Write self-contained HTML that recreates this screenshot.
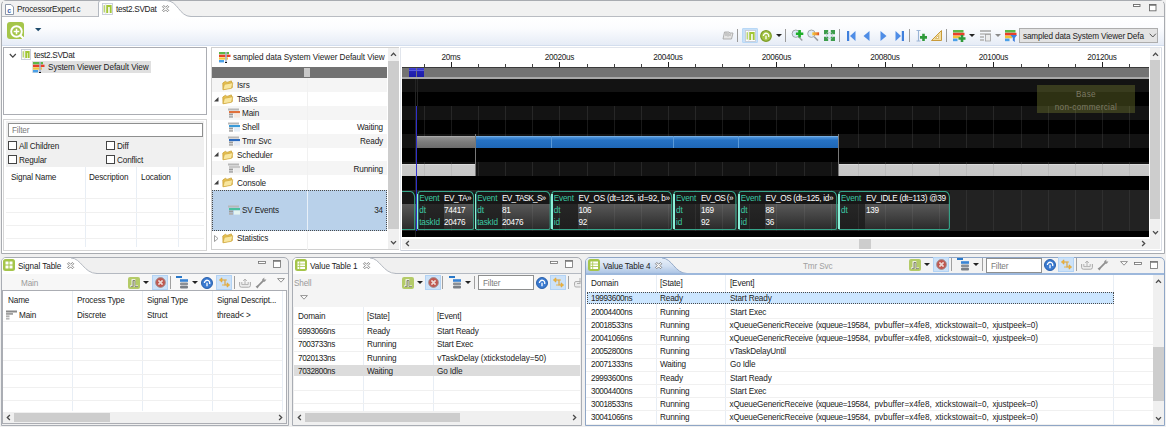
<!DOCTYPE html>
<html><head><meta charset="utf-8"><title>System Viewer</title>
<style>
*{box-sizing:border-box;margin:0;padding:0}
html,body{width:1166px;height:427px;overflow:hidden;background:#f0f0f0}
body{font-family:"Liberation Sans",sans-serif;font-size:8.2px;color:#222;position:relative;line-height:10px}
.a{position:absolute}
.t{position:absolute;white-space:nowrap;letter-spacing:-0.15px}
.r{text-align:right}
.g{color:#8a8a8a}
svg{position:absolute;overflow:visible}
</style></head><body>

<div class="a" style="left:1px;top:0px;width:1164px;height:254px;border:1px solid #a8abb0;border-radius:5px 5px 0 0;background:#f0f0f0"></div>
<div class="a" style="left:3px;top:1px;width:1160px;height:15px;background:#f1f1f1;"></div>
<div class="a" style="left:2px;top:16px;width:1162px;height:1px;background:#b9bcc2;"></div>
<svg style="left:98px;top:0px" width="104" height="18"><path d="M0.5,17.5 V3 Q0.5,0.5 3,0.5 H68 C80,0.5 81,16.5 93,16.5 H104 V18 H0.5Z" fill="#fff" stroke="none"/><path d="M0.5,17 V3 Q0.5,0.5 3,0.5 H68 C80,0.5 81,16.5 93,16.5 H104" fill="none" stroke="#b4b9c1"/></svg>
<svg style="left:5px;top:4px" width="9" height="11"><path d="M0.5,0.5 H6 L8.5,3 V10.5 H0.5Z" fill="#fff" stroke="#8c97a8"/><text x="2.2" y="8.6" font-size="7" font-weight="bold" fill="#3a62a8" font-family="Liberation Sans">c</text></svg>
<div class="t" style="left:17px;top:5px;letter-spacing:-0.2px;">ProcessorExpert.c</div>
<svg style="left:102px;top:3px" width="11" height="12"><rect x="0.5" y="0.5" width="10" height="11" fill="#fdfdfd" stroke="#c6ccd8" stroke-width="0.9"/><path d="M2.2,9.5 V2.2" stroke="#9cc430" stroke-width="1" fill="none"/><path d="M3.8,1 V11" stroke="#d0d0d8" stroke-width="0.6"/><path d="M5.2,10 V3 H8.7 V10" stroke="#a2c636" stroke-width="1.9" fill="none"/></svg>
<div class="t" style="left:116px;top:5px;letter-spacing:-0.3px;">test2.SVDat</div>
<svg style="left:162px;top:4.8px" width="8" height="8"><path d="M0.5,1.8 L1.8,0.5 L3.6,2.3 L5.4,0.5 L6.7,1.8 L4.9,3.6 L6.7,5.4 L5.4,6.7 L3.6,4.9 L1.8,6.7 L0.5,5.4 L2.3,3.6Z" fill="#fff" stroke="#6c6c6c" stroke-width="0.8"/></svg>
<svg style="left:1133px;top:4px" width="24" height="10"><rect x="0.5" y="0.5" width="6.5" height="2" fill="#fff" stroke="#6a6a6a" stroke-width="0.9"/><rect x="16.5" y="0.5" width="6.5" height="6.3" fill="#fff" stroke="#6a6a6a" stroke-width="0.9"/><rect x="16.5" y="0.5" width="6.5" height="1.2" fill="#6a6a6a"/></svg>
<div class="a" style="left:2px;top:17px;width:1162px;height:28px;background:linear-gradient(#ffffff 0%,#fbfcfe 40%,#e6ecf6 100%);"></div>
<div class="a" style="left:2px;top:45px;width:1162px;height:1px;background:#d3deee;"></div>
<div class="a" style="left:2px;top:46px;width:1162px;height:207px;background:#fff;"></div>
<svg style="left:7px;top:22px" width="18" height="18"><rect x="0" y="0" width="17" height="17" rx="3" fill="#a5c54a"/><circle cx="9.5" cy="9.5" r="5.3" fill="none" stroke="#fff" stroke-width="1.9"/><path d="M9.5,6.7 V12.3 M6.7,9.5 H12.3" stroke="#fff" stroke-width="1.5"/><path d="M13.5,13.5 L16.5,16.5" stroke="#fff" stroke-width="2.2"/></svg>
<svg style="left:34.5px;top:28px" width="8" height="4"><path d="M0,0 H6.4 L3.2,3.3Z" fill="#1e4a6b"/></svg>
<svg style="left:722px;top:30px" width="12" height="11"><path d="M1,9 L2.5,2 H7 L8,3 H11 L9.5,9Z" fill="#e4e4e4" stroke="#a8a8a8" stroke-width="0.9"/><path d="M4,2.5 V6 M6,3 V6.5 M8,3.5 V6" stroke="#9a9a9a" stroke-width="0.8"/></svg>
<div class="a" style="left:737px;top:29px;width:1px;height:13px;background:#9a9a9a;"></div>
<div class="a" style="left:741.5px;top:28px;width:16.5px;height:14.5px;background:#c8e0f8;border:1px solid #b8d8f6;border-radius:1px"></div>
<svg style="left:745px;top:30px" width="11" height="12"><rect x="0.5" y="0.5" width="10" height="11" fill="#fdfdfd" stroke="#c6ccd8" stroke-width="0.9"/><path d="M2.2,9.5 V2.2" stroke="#9cc430" stroke-width="1" fill="none"/><path d="M3.8,1 V11" stroke="#d0d0d8" stroke-width="0.6"/><path d="M5.2,10 V3 H8.7 V10" stroke="#a2c636" stroke-width="1.9" fill="none"/></svg>
<svg style="left:760px;top:29.5px" width="12" height="12"><circle cx="6" cy="6" r="5.3" fill="#a4c444" stroke="#7c9c28" stroke-width="1.2"/><path d="M6,9.3 V5.8 M3.4,6 A2.7,2.7 0 1 1 8.6,7" fill="none" stroke="#fff" stroke-width="1.3"/></svg>
<svg style="left:776px;top:34px" width="6" height="4"><path d="M0,0 H6 L3,3Z" fill="#222"/></svg>
<div class="a" style="left:785px;top:29px;width:1px;height:13px;background:#9a9a9a;"></div>
<svg style="left:791px;top:29px" width="13" height="13"><circle cx="4.8" cy="4.7" r="3.7" fill="#dce9f7" stroke="#a2a6aa" stroke-width="1"/><path d="M7.6,7.8 L11.3,11.6" stroke="#9a9ea2" stroke-width="1.5"/><path d="M8.6,1 V8.4 M4.9,4.7 H12.3" stroke="#1fae2a" stroke-width="2.6"/></svg>
<svg style="left:807px;top:29px" width="13" height="13"><circle cx="4.4" cy="4.7" r="3.7" fill="#dce9f7" stroke="#a2a6aa" stroke-width="1"/><path d="M7.2,7.8 L11,11.6" stroke="#9a9ea2" stroke-width="1.5"/><defs><linearGradient id="zo" x1="0" y1="0" x2="1" y2="0"><stop offset="0" stop-color="#f4c838"/><stop offset="0.6" stop-color="#ee9030"/><stop offset="1" stop-color="#d84828"/></linearGradient></defs><rect x="5.3" y="3.3" width="6.8" height="3" fill="url(#zo)"/></svg>
<svg style="left:824px;top:30px" width="11" height="11"><circle cx="5.5" cy="5.5" r="3" fill="#e0ecf6" stroke="#b4bcc4" stroke-width="0.8"/><path d="M0,0 H4.2 V1.8 L1.8,4.2 H0Z M11,0 H6.8 V1.8 L9.2,4.2 H11Z M0,11 H4.2 V9.2 L1.8,6.8 H0Z M11,11 H6.8 V9.2 L9.2,6.8 H11Z" fill="#3c9c4c"/><path d="M2,2 L4,4 M9,2 L7,4 M2,9 L4,7 M9,9 L7,7" stroke="#3c9c4c" stroke-width="1.2"/></svg>
<div class="a" style="left:839px;top:29px;width:1px;height:13px;background:#9a9a9a;"></div>
<svg style="left:847px;top:31px" width="9" height="10"><rect x="0" y="0" width="2.2" height="10" fill="#3f7fdc"/><path d="M8.5,0 V10 L3,5Z" fill="#4f8de6"/></svg>
<svg style="left:863px;top:31px" width="7" height="10"><path d="M6.5,0 V10 L0.5,5Z" fill="#4f8de6"/></svg>
<svg style="left:880px;top:31px" width="7" height="10"><path d="M0.5,0 V10 L6.5,5Z" fill="#4f8de6"/></svg>
<svg style="left:895px;top:31px" width="9" height="10"><rect x="6.8" y="0" width="2.2" height="10" fill="#3f7fdc"/><path d="M0.5,0 V10 L6,5Z" fill="#4f8de6"/></svg>
<div class="a" style="left:909px;top:29px;width:1px;height:13px;background:#9a9a9a;"></div>
<svg style="left:916px;top:30px" width="12" height="12"><path d="M0.5,0.5 H4.5 M2.5,0.5 V11 M0.5,11 H4.5" stroke="#9ab4d6" stroke-width="1.1" fill="none"/><path d="M7.5,3.8 V11 M4,7.4 H11" stroke="#2f9a3a" stroke-width="2.6"/></svg>
<svg style="left:931px;top:30px" width="11" height="11"><path d="M10.5,0.5 V10.5 H0.5Z" fill="#f4dfa0" stroke="#c89a3a" stroke-width="1"/><path d="M7.5,5.5 V8.5 H4.5Z" fill="#fff" stroke="#c89a3a" stroke-width="0.6"/></svg>
<div class="a" style="left:946px;top:29px;width:1px;height:13px;background:#9a9a9a;"></div>
<svg style="left:953px;top:30px" width="13" height="12"><rect x="0" y="0" width="10.5" height="2.6" fill="#5cb848"/><rect x="0" y="2.8" width="11.5" height="2.7" fill="#e8402a"/><rect x="0" y="5.7" width="7" height="2.6" fill="#f2c43a"/><rect x="0" y="8.6" width="4.5" height="2.6" fill="#4aa0e8"/><path d="M9,5 V12 M5.5,8.5 H12.5" stroke="#2f9a3a" stroke-width="2.6"/></svg>
<svg style="left:969px;top:34px" width="6" height="4"><path d="M0,0 H6 L3,3Z" fill="#222"/></svg>
<svg style="left:980px;top:30px" width="12" height="12"><rect x="0" y="0" width="11" height="2" fill="#b8b8b8"/><rect x="0" y="3" width="11" height="2" fill="#c8c8c8"/><rect x="0" y="6" width="4" height="2" fill="#c0c0c0"/><rect x="0" y="9" width="4" height="2" fill="#c0c0c0"/><rect x="5.5" y="4.5" width="5" height="6.5" fill="#ececec" stroke="#a0a0a0" stroke-width="0.8"/></svg>
<svg style="left:995px;top:34px" width="6" height="4"><path d="M0,0 H6 L3,3Z" fill="#8a8a8a"/></svg>
<svg style="left:1005px;top:30px" width="12" height="12"><rect x="0" y="0" width="10.5" height="2.6" fill="#5cb848"/><rect x="0" y="2.8" width="11.5" height="2.7" fill="#e8402a"/><rect x="0" y="5.7" width="7" height="2.6" fill="#f2c43a"/><rect x="0" y="8.6" width="4.5" height="2.6" fill="#4aa0e8"/><path d="M5.5,5 H12 L9.8,8 V12 L7.8,10.5 V8Z" fill="#3f7fdc"/></svg>
<div class="a" style="left:1019px;top:28px;width:139px;height:15px;background:#e3e3e3;border:1px solid #adadad"></div>
<div class="t" style="left:1023px;top:32px;letter-spacing:-0.15px;">sampled data System Viewer Defa</div>
<svg style="left:1149px;top:33px" width="8" height="5"><path d="M0.7,0.7 L3.8,4 L6.9,0.7" fill="none" stroke="#555" stroke-width="1"/></svg>
<div class="a" style="left:3px;top:47px;width:204px;height:68px;background:#fff;border:1px solid #abadb3"></div>
<svg style="left:9px;top:53px" width="8" height="6"><path d="M0.8,1 L3.8,4.2 L6.8,1" fill="none" stroke="#444" stroke-width="1.2"/></svg>
<svg style="left:21px;top:49px" width="10" height="11"><rect x="0.5" y="0.5" width="9" height="10" fill="#fdfdfd" stroke="#c6ccd8" stroke-width="0.9"/><path d="M2.2,8.5 V2.2" stroke="#9cc430" stroke-width="1" fill="none"/><path d="M3.8,1 V10" stroke="#d0d0d8" stroke-width="0.6"/><path d="M5.2,9 V3 H7.7 V9" stroke="#a2c636" stroke-width="1.9" fill="none"/></svg>
<div class="t" style="left:34px;top:51px;letter-spacing:-0.3px;">test2.SVDat</div>
<div class="a" style="left:32px;top:61px;width:119px;height:12px;background:#e0e0e0;"></div>
<svg style="left:33px;top:62px" width="12" height="11"><rect x="0" y="0" width="10" height="2.3" fill="#5cb848"/><rect x="0" y="2.7" width="11.5" height="2.3" fill="#e8402a"/><rect x="0" y="5.4" width="9" height="2.2" fill="#f2c43a"/><rect x="0" y="8" width="5" height="2.4" fill="#4aa0e8"/><rect x="6.2" y="0" width="1.6" height="10.4" fill="#a8b4d0"/><rect x="6" y="10" width="2" height="1" fill="#111"/></svg>
<div class="t" style="left:48px;top:63px;letter-spacing:-0.08px;">System Viewer Default View</div>
<div class="a" style="left:3px;top:119px;width:204px;height:132px;background:#fff;border:1px solid #d5d5d5"></div>
<div class="a" style="left:6px;top:121px;width:198px;height:46px;background:#f0f0f0;"></div>
<div class="a" style="left:8px;top:123px;width:195px;height:14px;background:#fff;border:1px solid #8e8f8f"></div>
<div class="t" style="left:12px;top:126px;color:#7a7a7a;">Filter</div>
<div class="a" style="left:8px;top:141px;width:9px;height:9px;background:#fff;border:1px solid #444"></div>
<div class="t" style="left:19px;top:142px;">All Children</div>
<div class="a" style="left:106px;top:141px;width:9px;height:9px;background:#fff;border:1px solid #444"></div>
<div class="t" style="left:117px;top:142px;">Diff</div>
<div class="a" style="left:8px;top:155px;width:9px;height:9px;background:#fff;border:1px solid #444"></div>
<div class="t" style="left:19px;top:156px;">Regular</div>
<div class="a" style="left:106px;top:155px;width:9px;height:9px;background:#fff;border:1px solid #444"></div>
<div class="t" style="left:117px;top:156px;">Conflict</div>
<div class="t" style="left:11px;top:173px;">Signal Name</div>
<div class="t" style="left:89px;top:173px;">Description</div>
<div class="t" style="left:141px;top:173px;">Location</div>
<div class="a" style="left:85px;top:167px;width:1px;height:80px;background:#e8eef5;"></div>
<div class="a" style="left:136px;top:167px;width:1px;height:80px;background:#e8eef5;"></div>
<div class="a" style="left:178px;top:167px;width:1px;height:80px;background:#e8eef5;"></div>
<div class="a" style="left:6px;top:198px;width:198px;height:1px;background:#f0f0f0;"></div>
<div class="a" style="left:6px;top:212px;width:198px;height:1px;background:#f0f0f0;"></div>
<div class="a" style="left:6px;top:225px;width:198px;height:1px;background:#f0f0f0;"></div>
<div class="a" style="left:6px;top:238px;width:198px;height:1px;background:#f0f0f0;"></div>
<div class="a" style="left:211px;top:47px;width:188px;height:203px;background:#fff;border:1px solid #d0d0d0"></div>
<svg style="left:219px;top:52px" width="12" height="11"><rect x="0" y="0" width="10" height="2.3" fill="#5cb848"/><rect x="0" y="2.7" width="11.5" height="2.3" fill="#e8402a"/><rect x="0" y="5.4" width="9" height="2.2" fill="#f2c43a"/><rect x="0" y="8" width="5" height="2.4" fill="#4aa0e8"/><rect x="6.2" y="0" width="1.6" height="10.4" fill="#a8b4d0"/><rect x="6" y="10" width="2" height="1" fill="#111"/></svg>
<div class="t" style="left:233px;top:53px;letter-spacing:-0.06px;">sampled data System Viewer Default View</div>
<div class="a" style="left:212px;top:67px;width:175px;height:11px;background:#727272;"></div>
<div class="a" style="left:304px;top:68px;width:6px;height:9px;background:#c8c8c8;"></div>
<div class="a" style="left:212px;top:78px;width:175px;height:14px;background:#f5f5f5;"></div>
<svg style="left:222px;top:80px" width="11" height="10"><path d="M1,9.6 L0.8,3 L3.4,1.3 L5,2.4 L9.4,0.9 L10.4,7.4Z" fill="#e6c152" stroke="#c49a2c" stroke-width="0.7"/><path d="M1,9.8 L2.4,4.3 L10.8,2.7 L9.5,8.3Z" fill="#f8e69e" stroke="#d0a63a" stroke-width="0.7"/></svg>
<div class="t" style="left:237px;top:81px;">Isrs</div>
<svg style="left:222px;top:94px" width="11" height="10"><path d="M1,9.6 L0.8,3 L3.4,1.3 L5,2.4 L9.4,0.9 L10.4,7.4Z" fill="#e6c152" stroke="#c49a2c" stroke-width="0.7"/><path d="M1,9.8 L2.4,4.3 L10.8,2.7 L9.5,8.3Z" fill="#f8e69e" stroke="#d0a63a" stroke-width="0.7"/></svg>
<div class="t" style="left:237px;top:95px;">Tasks</div>
<svg style="left:214px;top:97px" width="5" height="5"><path d="M4.5,0 V4.5 H0Z" fill="#404040"/></svg>
<div class="a" style="left:212px;top:106px;width:175px;height:14px;background:#f5f5f5;"></div>
<svg style="left:228px;top:108px" width="12" height="10"><rect x="0" y="0.5" width="11" height="2" fill="#b8b8b8"/><rect x="1" y="3" width="11" height="2.2" fill="#e0703a"/><rect x="1" y="5.6" width="4" height="1.8" fill="#9a9a9a"/><rect x="6" y="5.6" width="6" height="4" fill="#f4e8e0"/><rect x="1" y="8" width="4" height="1.8" fill="#b0b0b0"/></svg>
<div class="t" style="left:242px;top:109px;">Main</div>
<svg style="left:228px;top:122px" width="12" height="10"><rect x="0" y="0.5" width="11" height="2" fill="#b8b8b8"/><rect x="1" y="3" width="11" height="2.2" fill="#3a9ad8"/><rect x="1" y="5.6" width="4" height="1.8" fill="#9a9a9a"/><rect x="6" y="5.6" width="6" height="4" fill="#e4eef8"/><rect x="1" y="8" width="4" height="1.8" fill="#b0b0b0"/></svg>
<div class="t" style="left:242px;top:123px;">Shell</div>
<div class="t r" style="left:310px;top:123px;width:73px">Waiting</div>
<div class="a" style="left:212px;top:134px;width:175px;height:14px;background:#f5f5f5;"></div>
<svg style="left:228px;top:136px" width="12" height="10"><rect x="0" y="0.5" width="11" height="2" fill="#b8b8b8"/><rect x="1" y="3" width="11" height="2.2" fill="#2a6ac0"/><rect x="1" y="5.6" width="4" height="1.8" fill="#9a9a9a"/><rect x="6" y="5.6" width="6" height="4" fill="#e4eaf4"/><rect x="1" y="8" width="4" height="1.8" fill="#b0b0b0"/></svg>
<div class="t" style="left:242px;top:137px;">Tmr Svc</div>
<div class="t r" style="left:310px;top:137px;width:73px">Ready</div>
<svg style="left:222px;top:150px" width="11" height="10"><path d="M1,9.6 L0.8,3 L3.4,1.3 L5,2.4 L9.4,0.9 L10.4,7.4Z" fill="#e6c152" stroke="#c49a2c" stroke-width="0.7"/><path d="M1,9.8 L2.4,4.3 L10.8,2.7 L9.5,8.3Z" fill="#f8e69e" stroke="#d0a63a" stroke-width="0.7"/></svg>
<div class="t" style="left:237px;top:151px;">Scheduler</div>
<svg style="left:214px;top:152px" width="5" height="5"><path d="M4.5,0 V4.5 H0Z" fill="#404040"/></svg>
<div class="a" style="left:212px;top:161px;width:175px;height:14px;background:#f5f5f5;"></div>
<svg style="left:228px;top:163px" width="12" height="10"><rect x="0" y="0.5" width="11" height="2" fill="#b8b8b8"/><rect x="1" y="3" width="11" height="2.2" fill="#c8c8c8"/><rect x="1" y="5.6" width="4" height="1.8" fill="#9a9a9a"/><rect x="6" y="5.6" width="6" height="4" fill="#ececec"/><rect x="1" y="8" width="4" height="1.8" fill="#b0b0b0"/></svg>
<div class="t" style="left:242px;top:165px;">Idle</div>
<div class="t r" style="left:310px;top:165px;width:73px">Running</div>
<svg style="left:222px;top:177px" width="11" height="10"><path d="M1,9.6 L0.8,3 L3.4,1.3 L5,2.4 L9.4,0.9 L10.4,7.4Z" fill="#e6c152" stroke="#c49a2c" stroke-width="0.7"/><path d="M1,9.8 L2.4,4.3 L10.8,2.7 L9.5,8.3Z" fill="#f8e69e" stroke="#d0a63a" stroke-width="0.7"/></svg>
<div class="t" style="left:237px;top:179px;">Console</div>
<svg style="left:214px;top:180px" width="5" height="5"><path d="M4.5,0 V4.5 H0Z" fill="#404040"/></svg>
<div class="a" style="left:307px;top:78px;width:1px;height:172px;background:#f1f1f1;"></div>
<div class="a" style="left:212px;top:190px;width:175px;height:41px;background:#b9d1ea;border:1px dotted #4a4a4a"></div>
<div class="a" style="left:307px;top:191px;width:1px;height:39px;background:#e8f0f8;"></div>
<svg style="left:228px;top:205px" width="12" height="10"><rect x="0" y="0.5" width="11" height="2" fill="#b8b8b8"/><rect x="1" y="3" width="11" height="2.2" fill="#4ac0a0"/><rect x="1" y="5.6" width="4" height="1.8" fill="#9a9a9a"/><rect x="6" y="5.6" width="6" height="4" fill="#e4f4f0"/><rect x="1" y="8" width="4" height="1.8" fill="#b0b0b0"/></svg>
<div class="t" style="left:242px;top:206px;">SV Events</div>
<div class="t r" style="left:310px;top:206px;width:73px">34</div>
<svg style="left:222px;top:233px" width="11" height="10"><path d="M1,9.6 L0.8,3 L3.4,1.3 L5,2.4 L9.4,0.9 L10.4,7.4Z" fill="#e6c152" stroke="#c49a2c" stroke-width="0.7"/><path d="M1,9.8 L2.4,4.3 L10.8,2.7 L9.5,8.3Z" fill="#f8e69e" stroke="#d0a63a" stroke-width="0.7"/></svg>
<div class="t" style="left:237px;top:234px;">Statistics</div>
<svg style="left:214px;top:235px" width="5" height="7"><path d="M0.5,0.5 L4,3.5 L0.5,6.5Z" fill="#fff" stroke="#888" stroke-width="0.8"/></svg>
<div class="a" style="left:388px;top:48px;width:10.5px;height:201px;background:#f0f0f0;"></div>
<div class="a" style="left:388px;top:61px;width:10.5px;height:168px;background:#cdcdcd;"></div>
<svg style="left:390px;top:52px" width="7" height="5"><path d="M1,3.9 L3.5,1.3 L6,3.9" fill="none" stroke="#4a4a4a" stroke-width="1.3"/></svg>
<svg style="left:390px;top:240px" width="7" height="5"><path d="M1,1.1 L3.5,3.7 L6,1.1" fill="none" stroke="#4a4a4a" stroke-width="1.3"/></svg>
<div class="a" style="left:402px;top:47px;width:759px;height:203px;background:#fff;"></div>
<div class="a" style="left:424px;top:64px;width:1px;height:3px;background:#444;"></div>
<div class="a" style="left:451px;top:62px;width:1px;height:5px;background:#222;"></div>
<div class="a" style="left:478px;top:64px;width:1px;height:3px;background:#444;"></div>
<div class="a" style="left:505px;top:64px;width:1px;height:3px;background:#444;"></div>
<div class="a" style="left:532px;top:64px;width:1px;height:3px;background:#444;"></div>
<div class="a" style="left:559px;top:62px;width:1px;height:5px;background:#222;"></div>
<div class="a" style="left:587px;top:64px;width:1px;height:3px;background:#444;"></div>
<div class="a" style="left:614px;top:64px;width:1px;height:3px;background:#444;"></div>
<div class="a" style="left:641px;top:64px;width:1px;height:3px;background:#444;"></div>
<div class="a" style="left:668px;top:62px;width:1px;height:5px;background:#222;"></div>
<div class="a" style="left:695px;top:64px;width:1px;height:3px;background:#444;"></div>
<div class="a" style="left:722px;top:64px;width:1px;height:3px;background:#444;"></div>
<div class="a" style="left:749px;top:64px;width:1px;height:3px;background:#444;"></div>
<div class="a" style="left:776px;top:62px;width:1px;height:5px;background:#222;"></div>
<div class="a" style="left:804px;top:64px;width:1px;height:3px;background:#444;"></div>
<div class="a" style="left:831px;top:64px;width:1px;height:3px;background:#444;"></div>
<div class="a" style="left:858px;top:64px;width:1px;height:3px;background:#444;"></div>
<div class="a" style="left:885px;top:62px;width:1px;height:5px;background:#222;"></div>
<div class="a" style="left:912px;top:64px;width:1px;height:3px;background:#444;"></div>
<div class="a" style="left:939px;top:64px;width:1px;height:3px;background:#444;"></div>
<div class="a" style="left:966px;top:64px;width:1px;height:3px;background:#444;"></div>
<div class="a" style="left:993px;top:62px;width:1px;height:5px;background:#222;"></div>
<div class="a" style="left:1021px;top:64px;width:1px;height:3px;background:#444;"></div>
<div class="a" style="left:1048px;top:64px;width:1px;height:3px;background:#444;"></div>
<div class="a" style="left:1075px;top:64px;width:1px;height:3px;background:#444;"></div>
<div class="a" style="left:1102px;top:62px;width:1px;height:5px;background:#222;"></div>
<div class="a" style="left:1129px;top:64px;width:1px;height:3px;background:#444;"></div>
<div class="t" style="left:421.0px;top:53px;width:60px;text-align:center;letter-spacing:-0.3px;color:#222">20ms</div>
<div class="t" style="left:529.5px;top:53px;width:60px;text-align:center;letter-spacing:-0.3px;color:#222">20020us</div>
<div class="t" style="left:638.0px;top:53px;width:60px;text-align:center;letter-spacing:-0.3px;color:#222">20040us</div>
<div class="t" style="left:746.4px;top:53px;width:60px;text-align:center;letter-spacing:-0.3px;color:#222">20060us</div>
<div class="t" style="left:854.9px;top:53px;width:60px;text-align:center;letter-spacing:-0.3px;color:#222">20080us</div>
<div class="t" style="left:963.4px;top:53px;width:60px;text-align:center;letter-spacing:-0.3px;color:#222">20100us</div>
<div class="t" style="left:1071.9px;top:53px;width:60px;text-align:center;letter-spacing:-0.3px;color:#222">20120us</div>
<div class="a" style="left:402px;top:67px;width:747px;height:1px;background:#3a3a3a;"></div>
<div class="a" style="left:402px;top:68px;width:747px;height:10px;background:#737373;"></div>
<div class="a" style="left:409px;top:68px;width:7.3px;height:8.8px;background:linear-gradient(#4a4adc,#2222b4 40%,#1c1ca8);"></div>
<div class="a" style="left:416.8px;top:68px;width:7.2px;height:8.8px;background:linear-gradient(#4a4adc,#2222b4 40%,#1c1ca8);"></div>
<div class="a" style="left:409px;top:70px;width:15px;height:1px;background:#5a5ae0;"></div>
<div class="a" style="left:402px;top:78px;width:747px;height:14px;background:#131313;"></div>
<div class="a" style="left:402px;top:92px;width:747px;height:14px;background:#000;"></div>
<div class="a" style="left:402px;top:106px;width:747px;height:14px;background:#131313;"></div>
<div class="a" style="left:424px;top:106px;width:1px;height:14px;background:#272727;"></div>
<div class="a" style="left:451px;top:106px;width:1px;height:14px;background:#272727;"></div>
<div class="a" style="left:478px;top:106px;width:1px;height:14px;background:#272727;"></div>
<div class="a" style="left:505px;top:106px;width:1px;height:14px;background:#272727;"></div>
<div class="a" style="left:532px;top:106px;width:1px;height:14px;background:#272727;"></div>
<div class="a" style="left:559px;top:106px;width:1px;height:14px;background:#272727;"></div>
<div class="a" style="left:587px;top:106px;width:1px;height:14px;background:#272727;"></div>
<div class="a" style="left:614px;top:106px;width:1px;height:14px;background:#272727;"></div>
<div class="a" style="left:641px;top:106px;width:1px;height:14px;background:#272727;"></div>
<div class="a" style="left:668px;top:106px;width:1px;height:14px;background:#272727;"></div>
<div class="a" style="left:695px;top:106px;width:1px;height:14px;background:#272727;"></div>
<div class="a" style="left:722px;top:106px;width:1px;height:14px;background:#272727;"></div>
<div class="a" style="left:749px;top:106px;width:1px;height:14px;background:#272727;"></div>
<div class="a" style="left:776px;top:106px;width:1px;height:14px;background:#272727;"></div>
<div class="a" style="left:804px;top:106px;width:1px;height:14px;background:#272727;"></div>
<div class="a" style="left:831px;top:106px;width:1px;height:14px;background:#272727;"></div>
<div class="a" style="left:858px;top:106px;width:1px;height:14px;background:#272727;"></div>
<div class="a" style="left:885px;top:106px;width:1px;height:14px;background:#272727;"></div>
<div class="a" style="left:912px;top:106px;width:1px;height:14px;background:#272727;"></div>
<div class="a" style="left:939px;top:106px;width:1px;height:14px;background:#272727;"></div>
<div class="a" style="left:966px;top:106px;width:1px;height:14px;background:#272727;"></div>
<div class="a" style="left:993px;top:106px;width:1px;height:14px;background:#272727;"></div>
<div class="a" style="left:1021px;top:106px;width:1px;height:14px;background:#272727;"></div>
<div class="a" style="left:1048px;top:106px;width:1px;height:14px;background:#272727;"></div>
<div class="a" style="left:1075px;top:106px;width:1px;height:14px;background:#272727;"></div>
<div class="a" style="left:1102px;top:106px;width:1px;height:14px;background:#272727;"></div>
<div class="a" style="left:1129px;top:106px;width:1px;height:14px;background:#272727;"></div>
<div class="a" style="left:402px;top:120px;width:747px;height:14px;background:#000;"></div>
<div class="a" style="left:424px;top:120px;width:1px;height:14px;background:#191919;"></div>
<div class="a" style="left:451px;top:120px;width:1px;height:14px;background:#191919;"></div>
<div class="a" style="left:478px;top:120px;width:1px;height:14px;background:#191919;"></div>
<div class="a" style="left:505px;top:120px;width:1px;height:14px;background:#191919;"></div>
<div class="a" style="left:532px;top:120px;width:1px;height:14px;background:#191919;"></div>
<div class="a" style="left:559px;top:120px;width:1px;height:14px;background:#191919;"></div>
<div class="a" style="left:587px;top:120px;width:1px;height:14px;background:#191919;"></div>
<div class="a" style="left:614px;top:120px;width:1px;height:14px;background:#191919;"></div>
<div class="a" style="left:641px;top:120px;width:1px;height:14px;background:#191919;"></div>
<div class="a" style="left:668px;top:120px;width:1px;height:14px;background:#191919;"></div>
<div class="a" style="left:695px;top:120px;width:1px;height:14px;background:#191919;"></div>
<div class="a" style="left:722px;top:120px;width:1px;height:14px;background:#191919;"></div>
<div class="a" style="left:749px;top:120px;width:1px;height:14px;background:#191919;"></div>
<div class="a" style="left:776px;top:120px;width:1px;height:14px;background:#191919;"></div>
<div class="a" style="left:804px;top:120px;width:1px;height:14px;background:#191919;"></div>
<div class="a" style="left:831px;top:120px;width:1px;height:14px;background:#191919;"></div>
<div class="a" style="left:858px;top:120px;width:1px;height:14px;background:#191919;"></div>
<div class="a" style="left:885px;top:120px;width:1px;height:14px;background:#191919;"></div>
<div class="a" style="left:912px;top:120px;width:1px;height:14px;background:#191919;"></div>
<div class="a" style="left:939px;top:120px;width:1px;height:14px;background:#191919;"></div>
<div class="a" style="left:966px;top:120px;width:1px;height:14px;background:#191919;"></div>
<div class="a" style="left:993px;top:120px;width:1px;height:14px;background:#191919;"></div>
<div class="a" style="left:1021px;top:120px;width:1px;height:14px;background:#191919;"></div>
<div class="a" style="left:1048px;top:120px;width:1px;height:14px;background:#191919;"></div>
<div class="a" style="left:1075px;top:120px;width:1px;height:14px;background:#191919;"></div>
<div class="a" style="left:1102px;top:120px;width:1px;height:14px;background:#191919;"></div>
<div class="a" style="left:1129px;top:120px;width:1px;height:14px;background:#191919;"></div>
<div class="a" style="left:402px;top:134px;width:747px;height:14px;background:#131313;"></div>
<div class="a" style="left:424px;top:134px;width:1px;height:14px;background:#272727;"></div>
<div class="a" style="left:451px;top:134px;width:1px;height:14px;background:#272727;"></div>
<div class="a" style="left:478px;top:134px;width:1px;height:14px;background:#272727;"></div>
<div class="a" style="left:505px;top:134px;width:1px;height:14px;background:#272727;"></div>
<div class="a" style="left:532px;top:134px;width:1px;height:14px;background:#272727;"></div>
<div class="a" style="left:559px;top:134px;width:1px;height:14px;background:#272727;"></div>
<div class="a" style="left:587px;top:134px;width:1px;height:14px;background:#272727;"></div>
<div class="a" style="left:614px;top:134px;width:1px;height:14px;background:#272727;"></div>
<div class="a" style="left:641px;top:134px;width:1px;height:14px;background:#272727;"></div>
<div class="a" style="left:668px;top:134px;width:1px;height:14px;background:#272727;"></div>
<div class="a" style="left:695px;top:134px;width:1px;height:14px;background:#272727;"></div>
<div class="a" style="left:722px;top:134px;width:1px;height:14px;background:#272727;"></div>
<div class="a" style="left:749px;top:134px;width:1px;height:14px;background:#272727;"></div>
<div class="a" style="left:776px;top:134px;width:1px;height:14px;background:#272727;"></div>
<div class="a" style="left:804px;top:134px;width:1px;height:14px;background:#272727;"></div>
<div class="a" style="left:831px;top:134px;width:1px;height:14px;background:#272727;"></div>
<div class="a" style="left:858px;top:134px;width:1px;height:14px;background:#272727;"></div>
<div class="a" style="left:885px;top:134px;width:1px;height:14px;background:#272727;"></div>
<div class="a" style="left:912px;top:134px;width:1px;height:14px;background:#272727;"></div>
<div class="a" style="left:939px;top:134px;width:1px;height:14px;background:#272727;"></div>
<div class="a" style="left:966px;top:134px;width:1px;height:14px;background:#272727;"></div>
<div class="a" style="left:993px;top:134px;width:1px;height:14px;background:#272727;"></div>
<div class="a" style="left:1021px;top:134px;width:1px;height:14px;background:#272727;"></div>
<div class="a" style="left:1048px;top:134px;width:1px;height:14px;background:#272727;"></div>
<div class="a" style="left:1075px;top:134px;width:1px;height:14px;background:#272727;"></div>
<div class="a" style="left:1102px;top:134px;width:1px;height:14px;background:#272727;"></div>
<div class="a" style="left:1129px;top:134px;width:1px;height:14px;background:#272727;"></div>
<div class="a" style="left:402px;top:148px;width:747px;height:14px;background:#000;"></div>
<div class="a" style="left:402px;top:162px;width:747px;height:14px;background:#131313;"></div>
<div class="a" style="left:424px;top:162px;width:1px;height:14px;background:#272727;"></div>
<div class="a" style="left:451px;top:162px;width:1px;height:14px;background:#272727;"></div>
<div class="a" style="left:478px;top:162px;width:1px;height:14px;background:#272727;"></div>
<div class="a" style="left:505px;top:162px;width:1px;height:14px;background:#272727;"></div>
<div class="a" style="left:532px;top:162px;width:1px;height:14px;background:#272727;"></div>
<div class="a" style="left:559px;top:162px;width:1px;height:14px;background:#272727;"></div>
<div class="a" style="left:587px;top:162px;width:1px;height:14px;background:#272727;"></div>
<div class="a" style="left:614px;top:162px;width:1px;height:14px;background:#272727;"></div>
<div class="a" style="left:641px;top:162px;width:1px;height:14px;background:#272727;"></div>
<div class="a" style="left:668px;top:162px;width:1px;height:14px;background:#272727;"></div>
<div class="a" style="left:695px;top:162px;width:1px;height:14px;background:#272727;"></div>
<div class="a" style="left:722px;top:162px;width:1px;height:14px;background:#272727;"></div>
<div class="a" style="left:749px;top:162px;width:1px;height:14px;background:#272727;"></div>
<div class="a" style="left:776px;top:162px;width:1px;height:14px;background:#272727;"></div>
<div class="a" style="left:804px;top:162px;width:1px;height:14px;background:#272727;"></div>
<div class="a" style="left:831px;top:162px;width:1px;height:14px;background:#272727;"></div>
<div class="a" style="left:858px;top:162px;width:1px;height:14px;background:#272727;"></div>
<div class="a" style="left:885px;top:162px;width:1px;height:14px;background:#272727;"></div>
<div class="a" style="left:912px;top:162px;width:1px;height:14px;background:#272727;"></div>
<div class="a" style="left:939px;top:162px;width:1px;height:14px;background:#272727;"></div>
<div class="a" style="left:966px;top:162px;width:1px;height:14px;background:#272727;"></div>
<div class="a" style="left:993px;top:162px;width:1px;height:14px;background:#272727;"></div>
<div class="a" style="left:1021px;top:162px;width:1px;height:14px;background:#272727;"></div>
<div class="a" style="left:1048px;top:162px;width:1px;height:14px;background:#272727;"></div>
<div class="a" style="left:1075px;top:162px;width:1px;height:14px;background:#272727;"></div>
<div class="a" style="left:1102px;top:162px;width:1px;height:14px;background:#272727;"></div>
<div class="a" style="left:1129px;top:162px;width:1px;height:14px;background:#272727;"></div>
<div class="a" style="left:402px;top:176px;width:747px;height:14px;background:#000;"></div>
<div class="a" style="left:402px;top:190px;width:747px;height:41px;background:#222222;"></div>
<div class="a" style="left:424px;top:190px;width:1px;height:41px;background:#2f2f2f;"></div>
<div class="a" style="left:451px;top:190px;width:1px;height:41px;background:#2f2f2f;"></div>
<div class="a" style="left:478px;top:190px;width:1px;height:41px;background:#2f2f2f;"></div>
<div class="a" style="left:505px;top:190px;width:1px;height:41px;background:#2f2f2f;"></div>
<div class="a" style="left:532px;top:190px;width:1px;height:41px;background:#2f2f2f;"></div>
<div class="a" style="left:559px;top:190px;width:1px;height:41px;background:#2f2f2f;"></div>
<div class="a" style="left:587px;top:190px;width:1px;height:41px;background:#2f2f2f;"></div>
<div class="a" style="left:614px;top:190px;width:1px;height:41px;background:#2f2f2f;"></div>
<div class="a" style="left:641px;top:190px;width:1px;height:41px;background:#2f2f2f;"></div>
<div class="a" style="left:668px;top:190px;width:1px;height:41px;background:#2f2f2f;"></div>
<div class="a" style="left:695px;top:190px;width:1px;height:41px;background:#2f2f2f;"></div>
<div class="a" style="left:722px;top:190px;width:1px;height:41px;background:#2f2f2f;"></div>
<div class="a" style="left:749px;top:190px;width:1px;height:41px;background:#2f2f2f;"></div>
<div class="a" style="left:776px;top:190px;width:1px;height:41px;background:#2f2f2f;"></div>
<div class="a" style="left:804px;top:190px;width:1px;height:41px;background:#2f2f2f;"></div>
<div class="a" style="left:831px;top:190px;width:1px;height:41px;background:#2f2f2f;"></div>
<div class="a" style="left:858px;top:190px;width:1px;height:41px;background:#2f2f2f;"></div>
<div class="a" style="left:885px;top:190px;width:1px;height:41px;background:#2f2f2f;"></div>
<div class="a" style="left:912px;top:190px;width:1px;height:41px;background:#2f2f2f;"></div>
<div class="a" style="left:939px;top:190px;width:1px;height:41px;background:#2f2f2f;"></div>
<div class="a" style="left:966px;top:190px;width:1px;height:41px;background:#2f2f2f;"></div>
<div class="a" style="left:993px;top:190px;width:1px;height:41px;background:#2f2f2f;"></div>
<div class="a" style="left:1021px;top:190px;width:1px;height:41px;background:#2f2f2f;"></div>
<div class="a" style="left:1048px;top:190px;width:1px;height:41px;background:#2f2f2f;"></div>
<div class="a" style="left:1075px;top:190px;width:1px;height:41px;background:#2f2f2f;"></div>
<div class="a" style="left:1102px;top:190px;width:1px;height:41px;background:#2f2f2f;"></div>
<div class="a" style="left:1129px;top:190px;width:1px;height:41px;background:#2f2f2f;"></div>
<div class="a" style="left:402px;top:231px;width:747px;height:6px;background:#000;"></div>
<div class="a" style="left:402px;top:77.3px;width:747px;height:1.4px;background:#a8a8a8;"></div>
<div class="a" style="left:414.5px;top:79px;width:1px;height:158px;background:#242424;"></div>
<div class="a" style="left:417.3px;top:79px;width:1px;height:27px;background:#242424;"></div>
<div class="a" style="left:417px;top:136px;width:58px;height:12px;background:linear-gradient(#b4b4b4 0%,#8e8e8e 14%,#7c7c7c 50%,#6c6c6c 100%);"></div>
<div class="a" style="left:476px;top:136px;width:362px;height:12px;background:linear-gradient(#8cbdea 0%,#4a90d8 12%,#2672c4 35%,#1e66b6 100%);"></div>
<div class="a" style="left:551px;top:136px;width:1px;height:12px;background:#5a9ad8;"></div>
<div class="a" style="left:673px;top:136px;width:1px;height:12px;background:#5a9ad8;"></div>
<div class="a" style="left:738px;top:136px;width:1px;height:12px;background:#5a9ad8;"></div>
<div class="a" style="left:402px;top:164px;width:73px;height:12px;background:linear-gradient(#e4e4e4 0%,#cacaca 12%,#c6c6c6 100%);"></div>
<div class="a" style="left:839px;top:164px;width:310px;height:12px;background:linear-gradient(#e4e4e4 0%,#cacaca 12%,#c6c6c6 100%);"></div>
<div class="a" style="left:475px;top:134px;width:1px;height:42px;background:#787878;"></div>
<div class="a" style="left:838px;top:134px;width:1px;height:42px;background:#787878;"></div>
<div class="a" style="left:424px;top:164px;width:1px;height:12px;background:#bcbcbc;"></div>
<div class="a" style="left:451px;top:164px;width:1px;height:12px;background:#bcbcbc;"></div>
<div class="a" style="left:858px;top:164px;width:1px;height:12px;background:#bcbcbc;"></div>
<div class="a" style="left:885px;top:164px;width:1px;height:12px;background:#bcbcbc;"></div>
<div class="a" style="left:912px;top:164px;width:1px;height:12px;background:#bcbcbc;"></div>
<div class="a" style="left:939px;top:164px;width:1px;height:12px;background:#bcbcbc;"></div>
<div class="a" style="left:966px;top:164px;width:1px;height:12px;background:#bcbcbc;"></div>
<div class="a" style="left:993px;top:164px;width:1px;height:12px;background:#bcbcbc;"></div>
<div class="a" style="left:1021px;top:164px;width:1px;height:12px;background:#bcbcbc;"></div>
<div class="a" style="left:1048px;top:164px;width:1px;height:12px;background:#bcbcbc;"></div>
<div class="a" style="left:1075px;top:164px;width:1px;height:12px;background:#bcbcbc;"></div>
<div class="a" style="left:1102px;top:164px;width:1px;height:12px;background:#bcbcbc;"></div>
<div class="a" style="left:1129px;top:164px;width:1px;height:12px;background:#bcbcbc;"></div>
<div class="a" style="left:402px;top:192px;width:14px;height:12px;background:#171717;"></div>
<div class="a" style="left:402px;top:204px;width:14px;height:26px;background:linear-gradient(#262626,#1e1e1e);"></div>
<div class="a" style="left:402px;top:204px;width:14px;height:26px;background:linear-gradient(#585858,#2a2a2a);"></div>
<svg style="left:402px;top:191.3px" width="13.5" height="40"><path d="M0,0.5 H8.5 Q12.0,1 12.7,6 V38.5 H0" fill="none" stroke="#36a58a" stroke-width="1.1"/></svg>
<div class="a" style="left:416px;top:192px;width:58px;height:12px;background:#171717;"></div>
<div class="a" style="left:416px;top:204px;width:58px;height:26px;background:linear-gradient(#262626,#1e1e1e);"></div>
<div class="a" style="left:444px;top:204px;width:30px;height:26px;background:linear-gradient(#585858,#2a2a2a);"></div>
<div class="a" style="left:424px;top:204px;width:1px;height:26px;background:rgba(255,255,255,0.06);"></div>
<div class="a" style="left:451px;top:204px;width:1px;height:26px;background:rgba(255,255,255,0.06);"></div>
<svg style="left:416.5px;top:191.3px" width="57.5" height="40"><path d="M1,38.5 V3 Q1,0.5 3.5,0.5 H52.5 Q56.0,1 56.7,6 V36.5 Q56.7,38.5 55.0,38.5 H1" fill="none" stroke="#36a58a" stroke-width="1.1"/></svg>
<div class="a" style="left:416.5px;top:194px;width:1.6px;height:35px;background:#8cf0d8"></div>
<div class="t" style="left:419.3px;top:194.2px;color:#3cc8a4;letter-spacing:-0.2px">Event</div>
<div class="t" style="left:444.1px;top:194.2px;color:#fff;letter-spacing:-0.5px">EV_TA»</div>
<div class="t" style="left:419.3px;top:205.9px;color:#3cc8a4;letter-spacing:-0.2px">dt</div>
<div class="t" style="left:444.1px;top:205.9px;color:#fff;letter-spacing:-0.3px">74417</div>
<div class="t" style="left:419.3px;top:217.7px;color:#3cc8a4;letter-spacing:-0.2px">taskId</div>
<div class="t" style="left:444.1px;top:217.7px;color:#fff;letter-spacing:-0.3px">20476</div>
<div class="a" style="left:474px;top:192px;width:76px;height:12px;background:#171717;"></div>
<div class="a" style="left:474px;top:204px;width:76px;height:26px;background:linear-gradient(#262626,#1e1e1e);"></div>
<div class="a" style="left:502px;top:204px;width:48px;height:26px;background:linear-gradient(#585858,#2a2a2a);"></div>
<div class="a" style="left:478px;top:204px;width:1px;height:26px;background:rgba(255,255,255,0.06);"></div>
<div class="a" style="left:505px;top:204px;width:1px;height:26px;background:rgba(255,255,255,0.06);"></div>
<div class="a" style="left:532px;top:204px;width:1px;height:26px;background:rgba(255,255,255,0.06);"></div>
<svg style="left:474.5px;top:191.3px" width="76.0" height="40"><path d="M1,38.5 V3 Q1,0.5 3.5,0.5 H71.0 Q74.5,1 75.2,6 V36.5 Q75.2,38.5 73.5,38.5 H1" fill="none" stroke="#36a58a" stroke-width="1.1"/></svg>
<div class="a" style="left:474.5px;top:194px;width:1.6px;height:35px;background:#8cf0d8"></div>
<div class="t" style="left:477.3px;top:194.2px;color:#3cc8a4;letter-spacing:-0.2px">Event</div>
<div class="t" style="left:502.1px;top:194.2px;color:#fff;letter-spacing:-0.75px">EV_TASK_S»</div>
<div class="t" style="left:477.3px;top:205.9px;color:#3cc8a4;letter-spacing:-0.2px">dt</div>
<div class="t" style="left:502.1px;top:205.9px;color:#fff;letter-spacing:-0.3px">81</div>
<div class="t" style="left:477.3px;top:217.7px;color:#3cc8a4;letter-spacing:-0.2px">taskId</div>
<div class="t" style="left:502.1px;top:217.7px;color:#fff;letter-spacing:-0.3px">20476</div>
<div class="a" style="left:551px;top:192px;width:121px;height:12px;background:#171717;"></div>
<div class="a" style="left:551px;top:204px;width:121px;height:26px;background:linear-gradient(#262626,#1e1e1e);"></div>
<div class="a" style="left:578px;top:204px;width:94px;height:26px;background:linear-gradient(#585858,#2a2a2a);"></div>
<div class="a" style="left:559px;top:204px;width:1px;height:26px;background:rgba(255,255,255,0.06);"></div>
<div class="a" style="left:587px;top:204px;width:1px;height:26px;background:rgba(255,255,255,0.06);"></div>
<div class="a" style="left:614px;top:204px;width:1px;height:26px;background:rgba(255,255,255,0.06);"></div>
<div class="a" style="left:641px;top:204px;width:1px;height:26px;background:rgba(255,255,255,0.06);"></div>
<div class="a" style="left:668px;top:204px;width:1px;height:26px;background:rgba(255,255,255,0.06);"></div>
<svg style="left:551px;top:191.3px" width="121.5" height="40"><path d="M1,38.5 V3 Q1,0.5 3.5,0.5 H116.5 Q120.0,1 120.7,6 V36.5 Q120.7,38.5 119.0,38.5 H1" fill="none" stroke="#36a58a" stroke-width="1.1"/></svg>
<div class="a" style="left:551px;top:194px;width:1.6px;height:35px;background:#8cf0d8"></div>
<div class="t" style="left:553.8px;top:194.2px;color:#3cc8a4;letter-spacing:-0.2px">Event</div>
<div class="t" style="left:578.6px;top:194.2px;color:#fff;letter-spacing:-0.2px">EV_OS (dt=125, id=92, b»</div>
<div class="t" style="left:553.8px;top:205.9px;color:#3cc8a4;letter-spacing:-0.2px">dt</div>
<div class="t" style="left:578.6px;top:205.9px;color:#fff;letter-spacing:-0.3px">106</div>
<div class="t" style="left:553.8px;top:217.7px;color:#3cc8a4;letter-spacing:-0.2px">id</div>
<div class="t" style="left:578.6px;top:217.7px;color:#fff;letter-spacing:-0.3px">92</div>
<div class="a" style="left:673px;top:192px;width:64px;height:12px;background:#171717;"></div>
<div class="a" style="left:673px;top:204px;width:64px;height:26px;background:linear-gradient(#262626,#1e1e1e);"></div>
<div class="a" style="left:700px;top:204px;width:37px;height:26px;background:linear-gradient(#585858,#2a2a2a);"></div>
<div class="a" style="left:695px;top:204px;width:1px;height:26px;background:rgba(255,255,255,0.06);"></div>
<div class="a" style="left:722px;top:204px;width:1px;height:26px;background:rgba(255,255,255,0.06);"></div>
<svg style="left:673.3px;top:191.3px" width="63.700000000000045" height="40"><path d="M1,38.5 V3 Q1,0.5 3.5,0.5 H58.700000000000045 Q62.200000000000045,1 62.90000000000005,6 V36.5 Q62.90000000000005,38.5 61.200000000000045,38.5 H1" fill="none" stroke="#36a58a" stroke-width="1.1"/></svg>
<div class="a" style="left:673.3px;top:194px;width:1.6px;height:35px;background:#8cf0d8"></div>
<div class="t" style="left:676.1px;top:194.2px;color:#3cc8a4;letter-spacing:-0.2px">Event</div>
<div class="t" style="left:700.9px;top:194.2px;color:#fff;letter-spacing:-0.6px">EV_OS (»</div>
<div class="t" style="left:676.1px;top:205.9px;color:#3cc8a4;letter-spacing:-0.2px">dt</div>
<div class="t" style="left:700.9px;top:205.9px;color:#fff;letter-spacing:-0.3px">169</div>
<div class="t" style="left:676.1px;top:217.7px;color:#3cc8a4;letter-spacing:-0.2px">id</div>
<div class="t" style="left:700.9px;top:217.7px;color:#fff;letter-spacing:-0.3px">92</div>
<div class="a" style="left:738px;top:192px;width:100px;height:12px;background:#171717;"></div>
<div class="a" style="left:738px;top:204px;width:100px;height:26px;background:linear-gradient(#262626,#1e1e1e);"></div>
<div class="a" style="left:765px;top:204px;width:73px;height:26px;background:linear-gradient(#585858,#2a2a2a);"></div>
<div class="a" style="left:749px;top:204px;width:1px;height:26px;background:rgba(255,255,255,0.06);"></div>
<div class="a" style="left:776px;top:204px;width:1px;height:26px;background:rgba(255,255,255,0.06);"></div>
<div class="a" style="left:804px;top:204px;width:1px;height:26px;background:rgba(255,255,255,0.06);"></div>
<div class="a" style="left:831px;top:204px;width:1px;height:26px;background:rgba(255,255,255,0.06);"></div>
<svg style="left:738px;top:191.3px" width="99.5" height="40"><path d="M1,38.5 V3 Q1,0.5 3.5,0.5 H94.5 Q98.0,1 98.7,6 V36.5 Q98.7,38.5 97.0,38.5 H1" fill="none" stroke="#36a58a" stroke-width="1.1"/></svg>
<div class="a" style="left:738px;top:194px;width:1.6px;height:35px;background:#8cf0d8"></div>
<div class="t" style="left:740.8px;top:194.2px;color:#3cc8a4;letter-spacing:-0.2px">Event</div>
<div class="t" style="left:765.6px;top:194.2px;color:#fff;letter-spacing:-0.3px">EV_OS (dt=125, id»</div>
<div class="t" style="left:740.8px;top:205.9px;color:#3cc8a4;letter-spacing:-0.2px">dt</div>
<div class="t" style="left:765.6px;top:205.9px;color:#fff;letter-spacing:-0.3px">88</div>
<div class="t" style="left:740.8px;top:217.7px;color:#3cc8a4;letter-spacing:-0.2px">id</div>
<div class="t" style="left:765.6px;top:217.7px;color:#fff;letter-spacing:-0.3px">36</div>
<div class="a" style="left:838px;top:192px;width:112px;height:12px;background:#171717;"></div>
<div class="a" style="left:838px;top:204px;width:112px;height:26px;background:linear-gradient(#262626,#1e1e1e);"></div>
<div class="a" style="left:865px;top:204px;width:85px;height:26px;background:linear-gradient(#585858,#2a2a2a);"></div>
<div class="a" style="left:858px;top:204px;width:1px;height:26px;background:rgba(255,255,255,0.06);"></div>
<div class="a" style="left:885px;top:204px;width:1px;height:26px;background:rgba(255,255,255,0.06);"></div>
<div class="a" style="left:912px;top:204px;width:1px;height:26px;background:rgba(255,255,255,0.06);"></div>
<div class="a" style="left:939px;top:204px;width:1px;height:26px;background:rgba(255,255,255,0.06);"></div>
<svg style="left:838.3px;top:191.3px" width="112.20000000000005" height="40"><path d="M1,38.5 V3 Q1,0.5 3.5,0.5 H107.20000000000005 Q110.70000000000005,1 111.40000000000005,6 V36.5 Q111.40000000000005,38.5 109.70000000000005,38.5 H1" fill="none" stroke="#36a58a" stroke-width="1.1"/></svg>
<div class="a" style="left:838.3px;top:194px;width:1.6px;height:35px;background:#8cf0d8"></div>
<div class="t" style="left:841.1px;top:194.2px;color:#3cc8a4;letter-spacing:-0.2px">Event</div>
<div class="t" style="left:865.9px;top:194.2px;color:#fff;letter-spacing:-0.3px">EV_IDLE (dt=113) @39</div>
<div class="t" style="left:841.1px;top:205.9px;color:#3cc8a4;letter-spacing:-0.2px">dt</div>
<div class="t" style="left:865.9px;top:205.9px;color:#fff;letter-spacing:-0.3px">139</div>
<div class="a" style="left:416px;top:106px;width:1.2px;height:125px;background:#3030cc;"></div>
<div class="a" style="left:1037px;top:85px;width:98px;height:28px;background:rgba(120,130,50,0.38)"></div>
<div class="t" style="left:1037px;top:90px;width:98px;text-align:center;color:#7d7a64;letter-spacing:0.3px">Base</div>
<div class="t" style="left:1037px;top:102.5px;width:98px;text-align:center;color:#7d7a64;letter-spacing:0.3px">non-commercial</div>
<div class="a" style="left:402px;top:238.5px;width:748px;height:10.5px;background:#f0f0f0;"></div>
<div class="a" style="left:859px;top:239px;width:12px;height:10px;background:#cdcdcd;"></div>
<svg style="left:405px;top:240px" width="5" height="7"><path d="M3.9,1 L1.3,3.5 L3.9,6" fill="none" stroke="#4a4a4a" stroke-width="1.3"/></svg>
<svg style="left:1141px;top:240px" width="5" height="7"><path d="M1.1,1 L3.7,3.5 L1.1,6" fill="none" stroke="#4a4a4a" stroke-width="1.3"/></svg>
<div class="a" style="left:400px;top:250px;width:762px;height:1px;background:#c9ced8;"></div>
<div class="a" style="left:1161px;top:47px;width:1px;height:204px;background:#d9dde5;"></div>
<div class="a" style="left:400px;top:47px;width:762px;height:1px;background:#e1e5ec;"></div>
<div class="a" style="left:400px;top:47px;width:1px;height:204px;background:#e1e5ec;"></div>
<div class="a" style="left:1150px;top:48px;width:10px;height:201px;background:#f0f0f0;"></div>
<div class="a" style="left:1150px;top:60px;width:10px;height:159px;background:#cdcdcd;"></div>
<svg style="left:1152px;top:52px" width="7" height="5"><path d="M1,3.9 L3.5,1.3 L6,3.9" fill="none" stroke="#4a4a4a" stroke-width="1.3"/></svg>
<svg style="left:1152px;top:230px" width="7" height="5"><path d="M1,1.1 L3.5,3.7 L6,1.1" fill="none" stroke="#4a4a4a" stroke-width="1.3"/></svg>
<div class="a" style="left:1px;top:257px;width:288px;height:169px;border:1px solid #a9adb4;border-radius:5px 5px 0 0;background:#f0f0f0"></div>
<svg style="left:2px;top:258px" width="100" height="16"><path d="M0,16 V4 Q0,0 4,0 H69 C79,0 82,15.5 95,15.5 V16Z" fill="#fff"/><path d="M69,0 C79,0 82,15.5 95,15.5" fill="none" stroke="#b4b9c1"/></svg>
<div class="a" style="left:96px;top:273px;width:192px;height:1px;background:#b4b9c1;"></div>
<div class="a" style="left:2px;top:274px;width:286px;height:16px;background:#f7f7f7;"></div>
<svg style="left:3px;top:259px" width="12" height="12"><rect x="0" y="0" width="12" height="12" rx="2.5" fill="#a5c54a"/><rect x="2.5" y="2.5" width="3" height="3" fill="#fff"/><rect x="6.5" y="2.5" width="3" height="3" fill="#fff"/><rect x="2.5" y="6.5" width="3" height="3" fill="#fff"/><rect x="6.5" y="6.5" width="3" height="3" fill="#fff"/></svg>
<div class="t" style="left:18px;top:261.8px;letter-spacing:-0.1px;">Signal Table</div>
<svg style="left:67px;top:262px" width="8" height="8"><path d="M0.5,1.8 L1.8,0.5 L3.6,2.3 L5.4,0.5 L6.7,1.8 L4.9,3.6 L6.7,5.4 L5.4,6.7 L3.6,4.9 L1.8,6.7 L0.5,5.4 L2.3,3.6Z" fill="#fff" stroke="#6c6c6c" stroke-width="0.8"/></svg>
<svg style="left:258px;top:261px" width="8" height="4"><rect x="0.5" y="0.5" width="7" height="2" fill="#fff" stroke="#707070" stroke-width="0.8"/></svg>
<svg style="left:273px;top:260px" width="8" height="8"><rect x="0.5" y="0.5" width="7" height="7" fill="#fff" stroke="#707070" stroke-width="0.8"/><rect x="0.5" y="0.5" width="7" height="1.2" fill="#707070"/></svg>
<div class="t" style="left:21px;top:278.8px;color:#9a9a9a;">Main</div>
<svg style="left:128px;top:277px" width="12" height="12"><rect x="0" y="0" width="12" height="12" rx="2" fill="#b4cb68"/><path d="M2,9.3 H4.3 V3 H6.6 V9.3 H10" stroke="#fff" stroke-width="1.5" fill="none"/><path d="M2.6,9.6 H4.9 V3.5 H6.9 V9.6 H10" stroke="#6a6a5a" stroke-width="0.8" fill="none"/></svg>
<svg style="left:143px;top:281px" width="6" height="4"><path d="M0,0 H6 L3,3Z" fill="#222"/></svg>
<div class="a" style="left:152px;top:275px;width:16px;height:15px;background:#cde2f8;border:1px solid #b3d3f4"></div>
<svg style="left:155px;top:277px" width="11" height="11"><circle cx="5.5" cy="5.5" r="4.9" fill="#c0564e" stroke="#a09090" stroke-width="0.9"/><path d="M3.4,3.4 L7.6,7.6 M7.6,3.4 L3.4,7.6" stroke="#ecd8d4" stroke-width="1.6"/></svg>
<div class="a" style="left:170px;top:276px;width:1px;height:13px;background:#a0a0a0;"></div>
<svg style="left:176px;top:276px" width="13" height="13"><rect x="0" y="0" width="6" height="2" fill="#2a78c8"/><rect x="4" y="3.2" width="8" height="2.6" fill="#3a84d4"/><rect x="4" y="6.6" width="8" height="2.6" rx="1" fill="#8a8f96"/><rect x="4" y="9.8" width="8" height="2.6" rx="1" fill="#7a7f86"/></svg>
<svg style="left:192px;top:281px" width="6" height="4"><path d="M0,0 H6 L3,3Z" fill="#222"/></svg>
<svg style="left:201px;top:277px" width="12" height="12"><circle cx="6" cy="6" r="5.5" fill="#3a7ad0" stroke="#1e56a4" stroke-width="0.9"/><path d="M6,9.3 V5.8 M3.4,6 A2.7,2.7 0 1 1 8.6,7" fill="none" stroke="#fff" stroke-width="1.3"/></svg>
<div class="a" style="left:216px;top:275px;width:16px;height:15px;background:#cde2f8;border:1px solid #b3d3f4"></div>
<svg style="left:219px;top:277px" width="11" height="11"><path d="M2.5,3 H6 V8 H8.5" fill="none" stroke="#e0a030" stroke-width="1.1"/><path d="M0.3,3 L3,0.8 V5.2Z M10.7,8 L8,5.8 V10.2Z" fill="#f0b840" stroke="#d89820" stroke-width="0.5"/><path d="M6,3 H8 M3,8 H6" stroke="#e8b040" stroke-width="0.9"/></svg>
<div class="a" style="left:234px;top:276px;width:1px;height:13px;background:#a0a0a0;"></div>
<svg style="left:239px;top:277px" width="12" height="11"><path d="M0.6,5 V8.5 Q0.6,10.2 2.5,10.2 H9.5 Q11.4,10.2 11.4,8.5 V5" fill="#f0f0f0" stroke="#a8a8a8" stroke-width="1"/><path d="M2.8,5 V7.6 H9.2 V5 M6,7 V2.5 M4.2,4 L6,2 L7.8,4" stroke="#acacac" stroke-width="0.9" fill="none"/></svg>
<svg style="left:255px;top:277px" width="12" height="12"><path d="M2.2,9.8 L8.6,3.4" stroke="#8e8e8e" stroke-width="1.7"/><path d="M7.2,2.2 L9.4,0.4 L9.2,2.6 L11.4,2.6 L9.8,4.8 L7.6,4.6Z" fill="#969696"/><path d="M0.6,9.6 L2.4,8.6 L3.6,9.8 L2.4,11.6Z" fill="#8e8e8e"/></svg>
<svg style="left:277px;top:278px" width="8" height="5"><path d="M0.6,0.6 H7.4 L4,4.2Z" fill="#fff" stroke="#777" stroke-width="0.8"/></svg>
<div class="a" style="left:2px;top:290px;width:285px;height:134px;background:#fff;border:1px solid #abadb3"></div>
<div class="a" style="left:72px;top:291px;width:1px;height:120px;background:#e8eef5;"></div>
<div class="a" style="left:142px;top:291px;width:1px;height:120px;background:#e8eef5;"></div>
<div class="a" style="left:212px;top:291px;width:1px;height:120px;background:#e8eef5;"></div>
<div class="a" style="left:282px;top:291px;width:1px;height:120px;background:#e8eef5;"></div>
<div class="a" style="left:3px;top:321px;width:279px;height:1px;background:#f0f0f0;"></div>
<div class="a" style="left:3px;top:334px;width:279px;height:1px;background:#f0f0f0;"></div>
<div class="a" style="left:3px;top:348px;width:279px;height:1px;background:#f0f0f0;"></div>
<div class="a" style="left:3px;top:360px;width:279px;height:1px;background:#f0f0f0;"></div>
<div class="a" style="left:3px;top:374px;width:279px;height:1px;background:#f0f0f0;"></div>
<div class="a" style="left:3px;top:387px;width:279px;height:1px;background:#f0f0f0;"></div>
<div class="a" style="left:3px;top:400px;width:279px;height:1px;background:#f0f0f0;"></div>
<div class="t" style="left:8px;top:295.8px;">Name</div>
<div class="t" style="left:77px;top:295.8px;">Process Type</div>
<div class="t" style="left:147px;top:295.8px;">Signal Type</div>
<div class="t" style="left:217px;top:295.8px;">Signal Descript...</div>
<svg style="left:6px;top:310px" width="12" height="10"><rect x="0" y="0.5" width="11" height="2" fill="#8a8a8a"/><rect x="0" y="3" width="7" height="1.8" fill="#a0a0a0"/><rect x="0" y="5.4" width="3.5" height="1.8" fill="#b0b0b0"/><rect x="0" y="7.8" width="3.5" height="1.8" fill="#b8b8b8"/></svg>
<div class="t" style="left:19px;top:310.8px;">Main</div>
<div class="t" style="left:77px;top:310.8px;">Discrete</div>
<div class="t" style="left:147px;top:310.8px;">Struct</div>
<div class="t" style="left:217px;top:310.8px;">thread&lt; &gt;</div>
<div class="a" style="left:3px;top:412px;width:283px;height:11px;background:#f0f0f0;"></div>
<div class="a" style="left:14px;top:413px;width:96px;height:9px;background:#cdcdcd;"></div>
<svg style="left:6px;top:414px" width="5" height="7"><path d="M3.9,1 L1.3,3.5 L3.9,6" fill="none" stroke="#4a4a4a" stroke-width="1.3"/></svg>
<svg style="left:278px;top:414px" width="5" height="7"><path d="M1.1,1 L3.7,3.5 L1.1,6" fill="none" stroke="#4a4a4a" stroke-width="1.3"/></svg>
<div class="a" style="left:292px;top:257px;width:290px;height:169px;border:1px solid #a9adb4;border-radius:5px 5px 0 0;background:#f0f0f0"></div>
<svg style="left:293px;top:258px" width="100" height="16"><path d="M0,16 V4 Q0,0 4,0 H77 C87,0 90,15.5 103,15.5 V16Z" fill="#fff"/><path d="M77,0 C87,0 90,15.5 103,15.5" fill="none" stroke="#b4b9c1"/></svg>
<div class="a" style="left:395px;top:273px;width:186px;height:1px;background:#b4b9c1;"></div>
<div class="a" style="left:293px;top:274px;width:288px;height:33px;background:#f4f4f4;"></div>
<svg style="left:295px;top:259px" width="12" height="12"><rect x="0" y="0" width="12" height="12" rx="2.5" fill="#a5c54a"/><rect x="2.5" y="2.5" width="7.5" height="7.5" fill="#fff"/><path d="M2.5,5 H10 M2.5,7.5 H10 M4.7,2.5 V10" stroke="#a5c54a" stroke-width="0.8"/></svg>
<div class="t" style="left:310px;top:261.8px;letter-spacing:-0.1px;">Value Table 1</div>
<svg style="left:363px;top:262px" width="8" height="8"><path d="M0.5,1.8 L1.8,0.5 L3.6,2.3 L5.4,0.5 L6.7,1.8 L4.9,3.6 L6.7,5.4 L5.4,6.7 L3.6,4.9 L1.8,6.7 L0.5,5.4 L2.3,3.6Z" fill="#fff" stroke="#6c6c6c" stroke-width="0.8"/></svg>
<svg style="left:550px;top:261px" width="8" height="4"><rect x="0.5" y="0.5" width="7" height="2" fill="#fff" stroke="#707070" stroke-width="0.8"/></svg>
<svg style="left:565px;top:260px" width="8" height="8"><rect x="0.5" y="0.5" width="7" height="7" fill="#fff" stroke="#707070" stroke-width="0.8"/><rect x="0.5" y="0.5" width="7" height="1.2" fill="#707070"/></svg>
<div class="t" style="left:294px;top:278.8px;color:#9a9a9a;">Shell</div>
<svg style="left:402px;top:277px" width="12" height="12"><rect x="0" y="0" width="12" height="12" rx="2" fill="#b4cb68"/><path d="M2,9.3 H4.3 V3 H6.6 V9.3 H10" stroke="#fff" stroke-width="1.5" fill="none"/><path d="M2.6,9.6 H4.9 V3.5 H6.9 V9.6 H10" stroke="#6a6a5a" stroke-width="0.8" fill="none"/></svg>
<svg style="left:417px;top:281px" width="6" height="4"><path d="M0,0 H6 L3,3Z" fill="#222"/></svg>
<div class="a" style="left:425px;top:275px;width:16px;height:15px;background:#cde2f8;border:1px solid #b3d3f4"></div>
<svg style="left:428px;top:277px" width="11" height="11"><circle cx="5.5" cy="5.5" r="4.9" fill="#c0564e" stroke="#a09090" stroke-width="0.9"/><path d="M3.4,3.4 L7.6,7.6 M7.6,3.4 L3.4,7.6" stroke="#ecd8d4" stroke-width="1.6"/></svg>
<div class="a" style="left:442px;top:276px;width:1px;height:13px;background:#a0a0a0;"></div>
<svg style="left:449px;top:276px" width="13" height="13"><rect x="0" y="0" width="6" height="2" fill="#2a78c8"/><rect x="4" y="3.2" width="8" height="2.6" fill="#3a84d4"/><rect x="4" y="6.6" width="8" height="2.6" rx="1" fill="#8a8f96"/><rect x="4" y="9.8" width="8" height="2.6" rx="1" fill="#7a7f86"/></svg>
<svg style="left:465px;top:281px" width="6" height="4"><path d="M0,0 H6 L3,3Z" fill="#222"/></svg>
<div class="a" style="left:474px;top:276px;width:1px;height:13px;background:#a0a0a0;"></div>
<div class="a" style="left:478px;top:275px;width:56px;height:15px;background:#fff;border:1px solid #8e8f8f"></div>
<div class="t" style="left:483px;top:278.8px;color:#7a7a7a;">Filter</div>
<svg style="left:536px;top:277px" width="12" height="12"><circle cx="6" cy="6" r="5.5" fill="#3a7ad0" stroke="#1e56a4" stroke-width="0.9"/><path d="M6,9.3 V5.8 M3.4,6 A2.7,2.7 0 1 1 8.6,7" fill="none" stroke="#fff" stroke-width="1.3"/></svg>
<div class="a" style="left:550px;top:275px;width:16px;height:15px;background:#cde2f8;border:1px solid #b3d3f4"></div>
<svg style="left:553px;top:277px" width="11" height="11"><path d="M2.5,3 H6 V8 H8.5" fill="none" stroke="#e0a030" stroke-width="1.1"/><path d="M0.3,3 L3,0.8 V5.2Z M10.7,8 L8,5.8 V10.2Z" fill="#f0b840" stroke="#d89820" stroke-width="0.5"/><path d="M6,3 H8 M3,8 H6" stroke="#e8b040" stroke-width="0.9"/></svg>
<div class="a" style="left:568px;top:276px;width:1px;height:13px;background:#a0a0a0;"></div>
<svg style="left:574px;top:277px" width="7" height="11"><path d="M6.5,4.5 H2 Q0.5,4.5 0.5,6 V8.5 Q0.5,10 2,10 H6.5" fill="#ececec" stroke="#a8a8a8" stroke-width="0.9"/><path d="M3,6.5 H6.5 M6,1 V6" stroke="#a8a8a8" stroke-width="0.9" fill="none"/></svg>
<svg style="left:300px;top:295px" width="8" height="5"><path d="M0.6,0.6 H7.4 L4,4.2Z" fill="#fff" stroke="#777" stroke-width="0.8"/></svg>
<div class="a" style="left:294px;top:307px;width:286px;height:104px;background:#fff;"></div>
<div class="a" style="left:363px;top:307px;width:1px;height:104px;background:#e8eef5;"></div>
<div class="a" style="left:433px;top:307px;width:1px;height:104px;background:#e8eef5;"></div>
<div class="a" style="left:294px;top:365px;width:286px;height:11px;background:#dcdcdc;"></div>
<div class="a" style="left:294px;top:324px;width:286px;height:1px;background:#f0f0f0;"></div>
<div class="a" style="left:294px;top:338px;width:286px;height:1px;background:#f0f0f0;"></div>
<div class="a" style="left:294px;top:351px;width:286px;height:1px;background:#f0f0f0;"></div>
<div class="a" style="left:294px;top:390px;width:286px;height:1px;background:#f0f0f0;"></div>
<div class="a" style="left:294px;top:403px;width:286px;height:1px;background:#f0f0f0;"></div>
<div class="t" style="left:298px;top:311.8px;">Domain</div>
<div class="t" style="left:367px;top:311.8px;">[State]</div>
<div class="t" style="left:437px;top:311.8px;">[Event]</div>
<div class="t" style="left:298px;top:327.1px;letter-spacing:-0.4px;">6993066ns</div>
<div class="t" style="left:367px;top:327.1px;">Ready</div>
<div class="t" style="left:437px;top:327.1px;">Start Ready</div>
<div class="t" style="left:298px;top:340.3px;letter-spacing:-0.4px;">7003733ns</div>
<div class="t" style="left:367px;top:340.3px;">Running</div>
<div class="t" style="left:437px;top:340.3px;">Start Exec</div>
<div class="t" style="left:298px;top:353.5px;letter-spacing:-0.4px;">7020133ns</div>
<div class="t" style="left:367px;top:353.5px;">Running</div>
<div class="t" style="left:437.3px;top:353.5px;letter-spacing:-0.052px;">vTaskDelay (xtickstodelay=50)</div>
<div class="t" style="left:298px;top:366.7px;letter-spacing:-0.4px;">7032800ns</div>
<div class="t" style="left:367px;top:366.7px;">Waiting</div>
<div class="t" style="left:437px;top:366.7px;">Go Idle</div>
<div class="a" style="left:294px;top:412px;width:286px;height:11px;background:#f0f0f0;"></div>
<div class="a" style="left:305px;top:413px;width:155px;height:9px;background:#cdcdcd;"></div>
<svg style="left:297px;top:414px" width="5" height="7"><path d="M3.9,1 L1.3,3.5 L3.9,6" fill="none" stroke="#4a4a4a" stroke-width="1.3"/></svg>
<svg style="left:572px;top:414px" width="5" height="7"><path d="M1.1,1 L3.7,3.5 L1.1,6" fill="none" stroke="#4a4a4a" stroke-width="1.3"/></svg>
<div class="a" style="left:585px;top:257px;width:580px;height:169px;border:1px solid #8fa6c6;border-radius:5px 5px 0 0;background:#f3f3f3"></div>
<svg style="left:586px;top:258px" width="110" height="16"><defs><linearGradient id="tg" x1="0" y1="0" x2="0" y2="1"><stop offset="0" stop-color="#e9f0f9"/><stop offset="0.5" stop-color="#d2e0f2"/><stop offset="1" stop-color="#a9c2e3"/></linearGradient></defs><path d="M0,16 V4 Q0,0 4,0 H76 C86,0 89,15.5 101,15.5 V16Z" fill="url(#tg)"/><path d="M76,0 C86,0 89,15.5 101,15.5" fill="none" stroke="#93a9c8"/></svg>
<div class="a" style="left:586px;top:273px;width:578px;height:2px;background:#9db8dc;"></div>
<svg style="left:588px;top:259px" width="12" height="12"><rect x="0" y="0" width="12" height="12" rx="2.5" fill="#a5c54a"/><rect x="2.5" y="2.5" width="7.5" height="7.5" fill="#fff"/><path d="M2.5,5 H10 M2.5,7.5 H10 M4.7,2.5 V10" stroke="#a5c54a" stroke-width="0.8"/></svg>
<div class="t" style="left:603px;top:261.8px;letter-spacing:-0.1px;">Value Table 4</div>
<svg style="left:655px;top:262px" width="8" height="8"><path d="M0.5,1.8 L1.8,0.5 L3.6,2.3 L5.4,0.5 L6.7,1.8 L4.9,3.6 L6.7,5.4 L5.4,6.7 L3.6,4.9 L1.8,6.7 L0.5,5.4 L2.3,3.6Z" fill="#fff" stroke="#6c6c6c" stroke-width="0.8"/></svg>
<div class="t" style="left:803px;top:261.8px;color:#a0a0a0;">Tmr Svc</div>
<svg style="left:909px;top:259px" width="12" height="12"><rect x="0" y="0" width="12" height="12" rx="2" fill="#b4cb68"/><path d="M2,9.3 H4.3 V3 H6.6 V9.3 H10" stroke="#fff" stroke-width="1.5" fill="none"/><path d="M2.6,9.6 H4.9 V3.5 H6.9 V9.6 H10" stroke="#6a6a5a" stroke-width="0.8" fill="none"/></svg>
<svg style="left:924px;top:263px" width="6" height="4"><path d="M0,0 H6 L3,3Z" fill="#222"/></svg>
<div class="a" style="left:933px;top:257px;width:16px;height:15px;background:#cde2f8;border:1px solid #b3d3f4"></div>
<svg style="left:936px;top:259px" width="11" height="11"><circle cx="5.5" cy="5.5" r="4.9" fill="#c0564e" stroke="#a09090" stroke-width="0.9"/><path d="M3.4,3.4 L7.6,7.6 M7.6,3.4 L3.4,7.6" stroke="#ecd8d4" stroke-width="1.6"/></svg>
<div class="a" style="left:951px;top:258px;width:1px;height:13px;background:#a0a0a0;"></div>
<svg style="left:957px;top:258px" width="13" height="13"><rect x="0" y="0" width="6" height="2" fill="#2a78c8"/><rect x="4" y="3.2" width="8" height="2.6" fill="#3a84d4"/><rect x="4" y="6.6" width="8" height="2.6" rx="1" fill="#8a8f96"/><rect x="4" y="9.8" width="8" height="2.6" rx="1" fill="#7a7f86"/></svg>
<svg style="left:973px;top:263px" width="6" height="4"><path d="M0,0 H6 L3,3Z" fill="#222"/></svg>
<div class="a" style="left:982px;top:258px;width:1px;height:13px;background:#a0a0a0;"></div>
<div class="a" style="left:986px;top:258px;width:56px;height:15px;background:#fff;border:1px solid #8e8f8f"></div>
<div class="t" style="left:991px;top:261.8px;color:#7a7a7a;">Filter</div>
<svg style="left:1044px;top:259px" width="12" height="12"><circle cx="6" cy="6" r="5.5" fill="#3a7ad0" stroke="#1e56a4" stroke-width="0.9"/><path d="M6,9.3 V5.8 M3.4,6 A2.7,2.7 0 1 1 8.6,7" fill="none" stroke="#fff" stroke-width="1.3"/></svg>
<div class="a" style="left:1058px;top:257px;width:16px;height:15px;background:#cde2f8;border:1px solid #b3d3f4"></div>
<svg style="left:1061px;top:259px" width="11" height="11"><path d="M2.5,3 H6 V8 H8.5" fill="none" stroke="#e0a030" stroke-width="1.1"/><path d="M0.3,3 L3,0.8 V5.2Z M10.7,8 L8,5.8 V10.2Z" fill="#f0b840" stroke="#d89820" stroke-width="0.5"/><path d="M6,3 H8 M3,8 H6" stroke="#e8b040" stroke-width="0.9"/></svg>
<div class="a" style="left:1076px;top:258px;width:1px;height:13px;background:#a0a0a0;"></div>
<svg style="left:1081px;top:259px" width="12" height="11"><path d="M0.6,5 V8.5 Q0.6,10.2 2.5,10.2 H9.5 Q11.4,10.2 11.4,8.5 V5" fill="#f0f0f0" stroke="#a8a8a8" stroke-width="1"/><path d="M2.8,5 V7.6 H9.2 V5 M6,7 V2.5 M4.2,4 L6,2 L7.8,4" stroke="#acacac" stroke-width="0.9" fill="none"/></svg>
<svg style="left:1097px;top:259px" width="12" height="12"><path d="M2.2,9.8 L8.6,3.4" stroke="#8e8e8e" stroke-width="1.7"/><path d="M7.2,2.2 L9.4,0.4 L9.2,2.6 L11.4,2.6 L9.8,4.8 L7.6,4.6Z" fill="#969696"/><path d="M0.6,9.6 L2.4,8.6 L3.6,9.8 L2.4,11.6Z" fill="#8e8e8e"/></svg>
<svg style="left:1120px;top:261px" width="8" height="5"><path d="M0.6,0.6 H7.4 L4,4.2Z" fill="#fff" stroke="#777" stroke-width="0.8"/></svg>
<svg style="left:1134px;top:262px" width="8" height="4"><rect x="0.5" y="0.5" width="7" height="2" fill="#fff" stroke="#707070" stroke-width="0.8"/></svg>
<svg style="left:1150px;top:261px" width="8" height="8"><rect x="0.5" y="0.5" width="7" height="7" fill="#fff" stroke="#707070" stroke-width="0.8"/><rect x="0.5" y="0.5" width="7" height="1.2" fill="#707070"/></svg>
<div class="a" style="left:586px;top:275px;width:567px;height:150px;background:#fff;"></div>
<div class="a" style="left:656px;top:275px;width:1px;height:150px;background:#e8eef5;"></div>
<div class="a" style="left:725px;top:275px;width:1px;height:150px;background:#e8eef5;"></div>
<div class="a" style="left:1113px;top:275px;width:1px;height:150px;background:#e8eef5;"></div>
<div class="a" style="left:587px;top:292px;width:527px;height:12px;background:#cce6ff;border:1px dotted #4a4a4a"></div>
<div class="a" style="left:586px;top:318px;width:567px;height:1px;background:#f0f0f0;"></div>
<div class="a" style="left:586px;top:331px;width:567px;height:1px;background:#f0f0f0;"></div>
<div class="a" style="left:586px;top:344px;width:567px;height:1px;background:#f0f0f0;"></div>
<div class="a" style="left:586px;top:358px;width:567px;height:1px;background:#f0f0f0;"></div>
<div class="a" style="left:586px;top:371px;width:567px;height:1px;background:#f0f0f0;"></div>
<div class="a" style="left:586px;top:384px;width:567px;height:1px;background:#f0f0f0;"></div>
<div class="a" style="left:586px;top:397px;width:567px;height:1px;background:#f0f0f0;"></div>
<div class="a" style="left:586px;top:410px;width:567px;height:1px;background:#f0f0f0;"></div>
<div class="a" style="left:586px;top:424px;width:567px;height:1px;background:#f0f0f0;"></div>
<div class="t" style="left:591px;top:279.1px;">Domain</div>
<div class="t" style="left:660px;top:279.1px;">[State]</div>
<div class="t" style="left:730px;top:279.1px;">[Event]</div>
<div class="t" style="left:591px;top:294.3px;letter-spacing:-0.4px;">19993600ns</div>
<div class="t" style="left:660px;top:294.3px;">Ready</div>
<div class="t" style="left:730px;top:294.3px;">Start Ready</div>
<div class="t" style="left:591px;top:307.5px;letter-spacing:-0.4px;">20004400ns</div>
<div class="t" style="left:660px;top:307.5px;">Running</div>
<div class="t" style="left:730px;top:307.5px;">Start Exec</div>
<div class="t" style="left:591px;top:320.7px;letter-spacing:-0.4px;">20018533ns</div>
<div class="t" style="left:660px;top:320.7px;">Running</div>
<div class="t" style="left:729.5px;top:320.7px;letter-spacing:-0.178px;">xQueueGenericReceive</div>
<div class="t" style="left:815.7px;top:320.7px;letter-spacing:-0.372px;">(xqueue=19584,</div>
<div class="t" style="left:874.5px;top:320.7px;letter-spacing:0.059px;">pvbuffer=x4fe8,</div>
<div class="t" style="left:935.2px;top:320.7px;letter-spacing:0.017px;">xtickstowait=0,</div>
<div class="t" style="left:992.4px;top:320.7px;letter-spacing:-0.094px;">xjustpeek=0)</div>
<div class="t" style="left:591px;top:333.90000000000003px;letter-spacing:-0.4px;">20041066ns</div>
<div class="t" style="left:660px;top:333.90000000000003px;">Running</div>
<div class="t" style="left:729.5px;top:333.90000000000003px;letter-spacing:-0.178px;">xQueueGenericReceive</div>
<div class="t" style="left:815.7px;top:333.90000000000003px;letter-spacing:-0.372px;">(xqueue=19584,</div>
<div class="t" style="left:874.5px;top:333.90000000000003px;letter-spacing:0.059px;">pvbuffer=x4fe8,</div>
<div class="t" style="left:935.2px;top:333.90000000000003px;letter-spacing:0.017px;">xtickstowait=0,</div>
<div class="t" style="left:992.4px;top:333.90000000000003px;letter-spacing:-0.094px;">xjustpeek=0)</div>
<div class="t" style="left:591px;top:347.1px;letter-spacing:-0.4px;">20052800ns</div>
<div class="t" style="left:660px;top:347.1px;">Running</div>
<div class="t" style="left:730px;top:347.1px;">vTaskDelayUntil</div>
<div class="t" style="left:591px;top:360.3px;letter-spacing:-0.4px;">20071333ns</div>
<div class="t" style="left:660px;top:360.3px;">Waiting</div>
<div class="t" style="left:730px;top:360.3px;">Go Idle</div>
<div class="t" style="left:591px;top:373.5px;letter-spacing:-0.4px;">29993600ns</div>
<div class="t" style="left:660px;top:373.5px;">Ready</div>
<div class="t" style="left:730px;top:373.5px;">Start Ready</div>
<div class="t" style="left:591px;top:386.7px;letter-spacing:-0.4px;">30004400ns</div>
<div class="t" style="left:660px;top:386.7px;">Running</div>
<div class="t" style="left:730px;top:386.7px;">Start Exec</div>
<div class="t" style="left:591px;top:399.90000000000003px;letter-spacing:-0.4px;">30018533ns</div>
<div class="t" style="left:660px;top:399.90000000000003px;">Running</div>
<div class="t" style="left:729.5px;top:399.90000000000003px;letter-spacing:-0.178px;">xQueueGenericReceive</div>
<div class="t" style="left:815.7px;top:399.90000000000003px;letter-spacing:-0.372px;">(xqueue=19584,</div>
<div class="t" style="left:874.5px;top:399.90000000000003px;letter-spacing:0.059px;">pvbuffer=x4fe8,</div>
<div class="t" style="left:935.2px;top:399.90000000000003px;letter-spacing:0.017px;">xtickstowait=0,</div>
<div class="t" style="left:992.4px;top:399.90000000000003px;letter-spacing:-0.094px;">xjustpeek=0)</div>
<div class="t" style="left:591px;top:413.1px;letter-spacing:-0.4px;">30041066ns</div>
<div class="t" style="left:660px;top:413.1px;">Running</div>
<div class="t" style="left:729.5px;top:413.1px;letter-spacing:-0.178px;">xQueueGenericReceive</div>
<div class="t" style="left:815.7px;top:413.1px;letter-spacing:-0.372px;">(xqueue=19584,</div>
<div class="t" style="left:874.5px;top:413.1px;letter-spacing:0.059px;">pvbuffer=x4fe8,</div>
<div class="t" style="left:935.2px;top:413.1px;letter-spacing:0.017px;">xtickstowait=0,</div>
<div class="t" style="left:992.4px;top:413.1px;letter-spacing:-0.094px;">xjustpeek=0)</div>
<div class="a" style="left:1153px;top:275px;width:11px;height:150px;background:#f0f0f0;"></div>
<div class="a" style="left:1153px;top:347px;width:11px;height:54px;background:#cdcdcd;"></div>
<svg style="left:1155px;top:279px" width="7" height="5"><path d="M1,3.9 L3.5,1.3 L6,3.9" fill="none" stroke="#4a4a4a" stroke-width="1.3"/></svg>
<svg style="left:1155px;top:416px" width="7" height="5"><path d="M1,1.1 L3.5,3.7 L6,1.1" fill="none" stroke="#4a4a4a" stroke-width="1.3"/></svg>
</body></html>
